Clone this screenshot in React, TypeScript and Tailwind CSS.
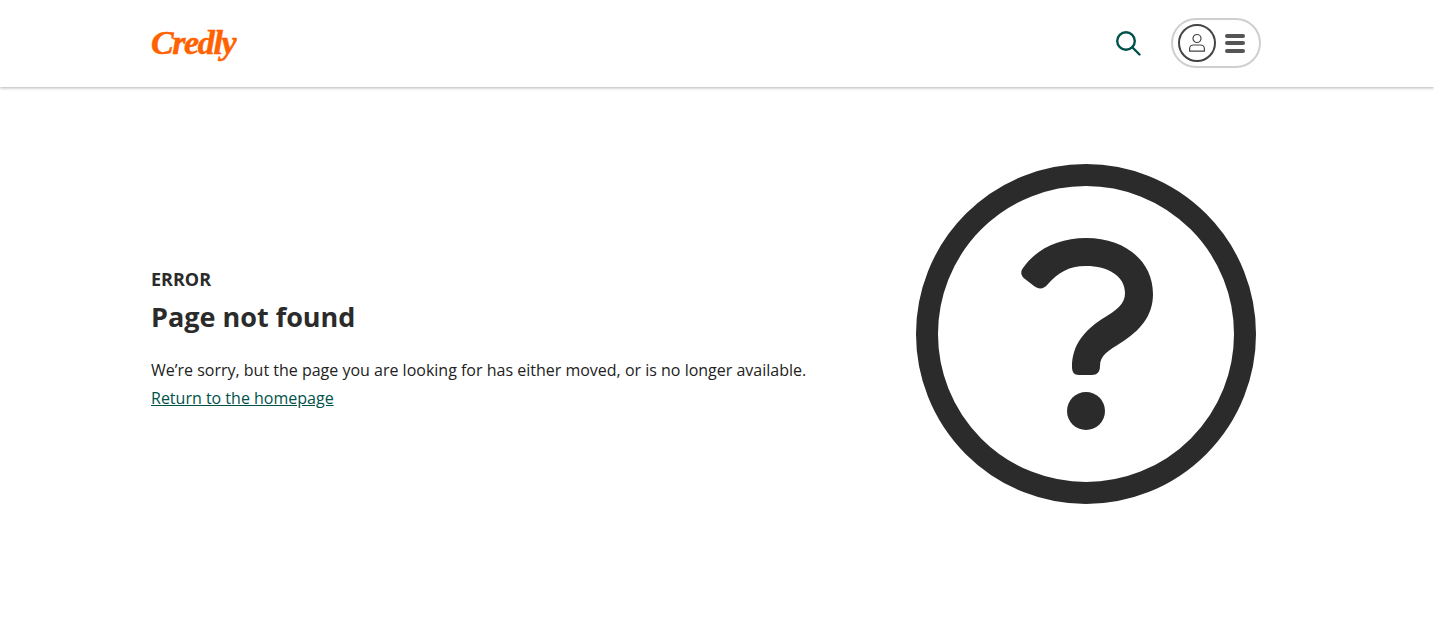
const App = () => {
  return (
    <div className="flex h-[633px] flex-col overflow-hidden bg-white font-['Open_Sans',sans-serif] text-[#2b2b2b]">
      <header className="flex h-[87px] shrink-0 items-center justify-between pl-[151px] pr-[173px] shadow-[0_1px_3px_rgba(0,0,0,0.3)]">
        <a className="mt-[-1px] font-['Liberation_Serif',serif] text-[34px] font-bold italic leading-none tracking-[-1.4px] text-[#ff6200] [-webkit-text-stroke:0.5px_#ff6200]">
          Credly
        </a>
        <div className="mt-[-1px] flex items-center gap-[30px]">
          <svg width="25" height="25" viewBox="0 0 25 25" fill="none" stroke="#00524a" strokeWidth="2.4" strokeLinecap="round">
            <circle cx="10" cy="10" r="8.8" />
            <path d="M16.5 16.5 23.5 23.5" />
          </svg>
          <div className="flex h-[50px] w-[90px] items-center gap-[9px] rounded-full border-2 border-[#cfcfcf] pl-[5px]">
            <div className="flex h-[38px] w-[38px] items-center justify-center rounded-full border-2 border-[#444]">
              <svg width="18" height="20" viewBox="0 0 18 20" fill="none" stroke="#444" strokeWidth="1.2">
                <circle cx="9" cy="5.5" r="4" />
                <path d="M1.6 18.2v-2.4c0-2.4 2-3.8 4-3.8h6.8c2 0 4 1.4 4 3.8v2.4z" strokeLinejoin="round" />
              </svg>
            </div>
            <div className="flex w-5 flex-col gap-[3.5px]">
              <span className="h-[4px] rounded-sm bg-[#555]" />
              <span className="h-[4px] rounded-sm bg-[#555]" />
              <span className="h-[4px] rounded-sm bg-[#555]" />
            </div>
          </div>
        </div>
      </header>
      <main className="flex items-center justify-between pl-[151px] pr-[178px] pt-[77px]">
        <div className="mt-[12px]">
          <div className="text-[18px] font-bold leading-[22px]">ERROR</div>
          <h1 className="mt-[9px] text-[27px] font-bold leading-[36px]">Page not found</h1>
          <p className="mt-[21px] text-[16px] leading-[28px] text-[#222]">
            We’re sorry, but the page you are looking for has either moved, or is no longer available.
          </p>
          <a className="block text-[16px] leading-[28px] text-[#00524a] underline">Return to the homepage</a>
        </div>
        <svg width="340" height="340" viewBox="916 164 340 340" fill="#2b2b2b">
          <circle cx="1086" cy="334" r="159" fill="none" stroke="#2b2b2b" strokeWidth="22" />
          <path d="M1023 268C1036 249 1059 238 1086 238C1125 238 1153 261 1153 294C1153 317 1139 331 1122 342C1108 351 1100 355 1100 366C1100 372 1097 375 1092 375H1079C1074 375 1072 372 1072 367C1072 345 1084 331 1102 319C1117 310 1125 304 1125 293C1125 276 1108 266 1086 266C1068 266 1058 273 1048 284C1044 289 1039 290 1034 286L1025 279C1021 276 1020 272 1023 268Z" />
          <circle cx="1086" cy="411" r="19" />
        </svg>
      </main>
    </div>
  )
}

export default App
